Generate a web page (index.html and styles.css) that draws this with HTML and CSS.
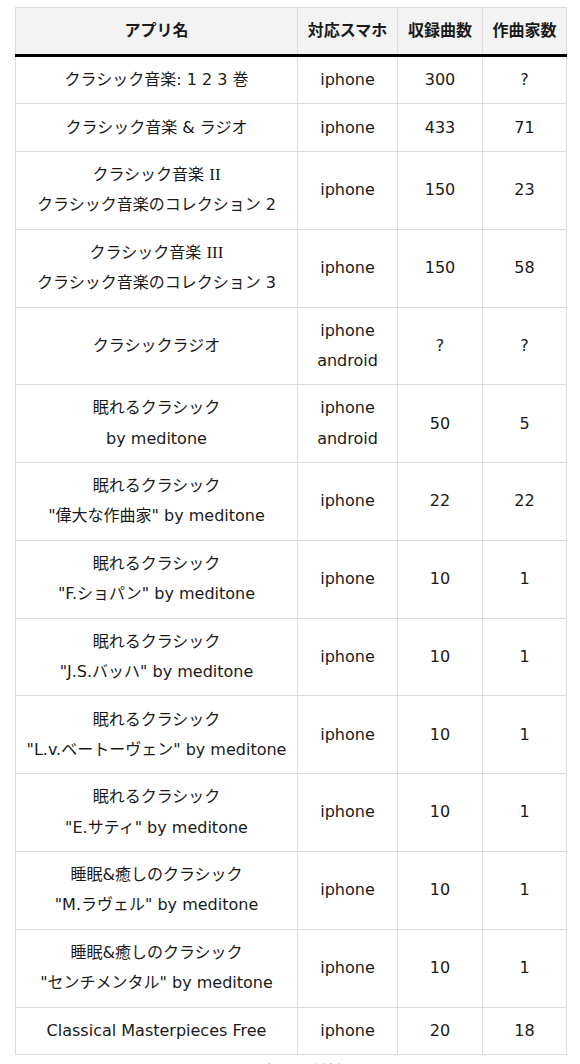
FILE: index.html
```html
<!DOCTYPE html>
<html lang="ja">
<head>
<meta charset="utf-8">
<title>クラシック音楽アプリ比較</title>
<link rel="stylesheet" href="styles.css">
</head>
<body>
<figure class="table-block">
  <table class="apps">
    <colgroup>
      <col class="c-name">
      <col class="c-os">
      <col class="c-songs">
      <col class="c-comp">
    </colgroup>
    <thead>
      <tr><th>アプリ名</th><th>対応スマホ</th><th>収録曲数</th><th>作曲家数</th></tr>
    </thead>
    <tbody>
      <tr><td>クラシック音楽: 1 2 3 巻</td><td>iphone</td><td>300</td><td>?</td></tr>
      <tr><td>クラシック音楽 &amp; ラジオ</td><td>iphone</td><td>433</td><td>71</td></tr>
      <tr><td>クラシック音楽 <span class="roman">II</span><br>クラシック音楽のコレクション 2</td><td>iphone</td><td>150</td><td>23</td></tr>
      <tr><td>クラシック音楽 <span class="roman">III</span><br>クラシック音楽のコレクション 3</td><td>iphone</td><td>150</td><td>58</td></tr>
      <tr><td>クラシックラジオ</td><td>iphone<br>android</td><td>?</td><td>?</td></tr>
      <tr><td>眠れるクラシック<br>by meditone</td><td>iphone<br>android</td><td>50</td><td>5</td></tr>
      <tr><td>眠れるクラシック<br>"偉大な作曲家" by meditone</td><td>iphone</td><td>22</td><td>22</td></tr>
      <tr><td>眠れるクラシック<br>"F.ショパン" by meditone</td><td>iphone</td><td>10</td><td>1</td></tr>
      <tr><td>眠れるクラシック<br>"J.S.バッハ" by meditone</td><td>iphone</td><td>10</td><td>1</td></tr>
      <tr><td>眠れるクラシック<br>"L.v.ベートーヴェン" by meditone</td><td>iphone</td><td>10</td><td>1</td></tr>
      <tr><td>眠れるクラシック<br>"E.サティ" by meditone</td><td>iphone</td><td>10</td><td>1</td></tr>
      <tr><td>睡眠&amp;癒しのクラシック<br>"M.ラヴェル" by meditone</td><td>iphone</td><td>10</td><td>1</td></tr>
      <tr><td>睡眠&amp;癒しのクラシック<br>"センチメンタル" by meditone</td><td>iphone</td><td>10</td><td>1</td></tr>
      <tr><td>Classical Masterpieces Free</td><td>iphone</td><td>20</td><td>18</td></tr>
    </tbody>
  </table>
  <figcaption class="caption">キャプションを追加</figcaption>
</figure>
</body>
</html>
```

FILE: styles.css
```css
html, body {
  margin: 0;
  padding: 0;
  background: #ffffff;
}

body {
  font-family: "DejaVu Sans", "Noto Sans CJK JP", sans-serif;
  color: #1a1a1a;
}

.table-block {
  margin: 0;
  padding: 7px 14px 0 15px;
}

.apps {
  width: 551px;
  border-collapse: collapse;
  table-layout: fixed;
  font-size: 16px;
  line-height: 30.3px;
}

.c-name { width: 282px; }
.c-os { width: 100px; }
.c-songs { width: 85px; }
.c-comp { width: 84px; }

.apps th,
.apps td {
  border: 1px solid #dcdcdc;
  padding: 8.1px 4px;
  text-align: center;
  vertical-align: middle;
  white-space: nowrap;
}

.apps th {
  background: #f3f3f3;
  font-weight: bold;
  padding-top: 8px;
  padding-bottom: 8px;
  line-height: 30px;
}

.apps thead th {
  border-bottom: 3px solid #000000;
}

.roman {
  font-family: "Liberation Serif", "DejaVu Serif", serif;
  font-size: 17px;
}

.caption {
  margin: 5px 0 0;
  text-align: center;
  font-size: 13px;
  line-height: 20px;
  color: #9a9a9a;
}
```
